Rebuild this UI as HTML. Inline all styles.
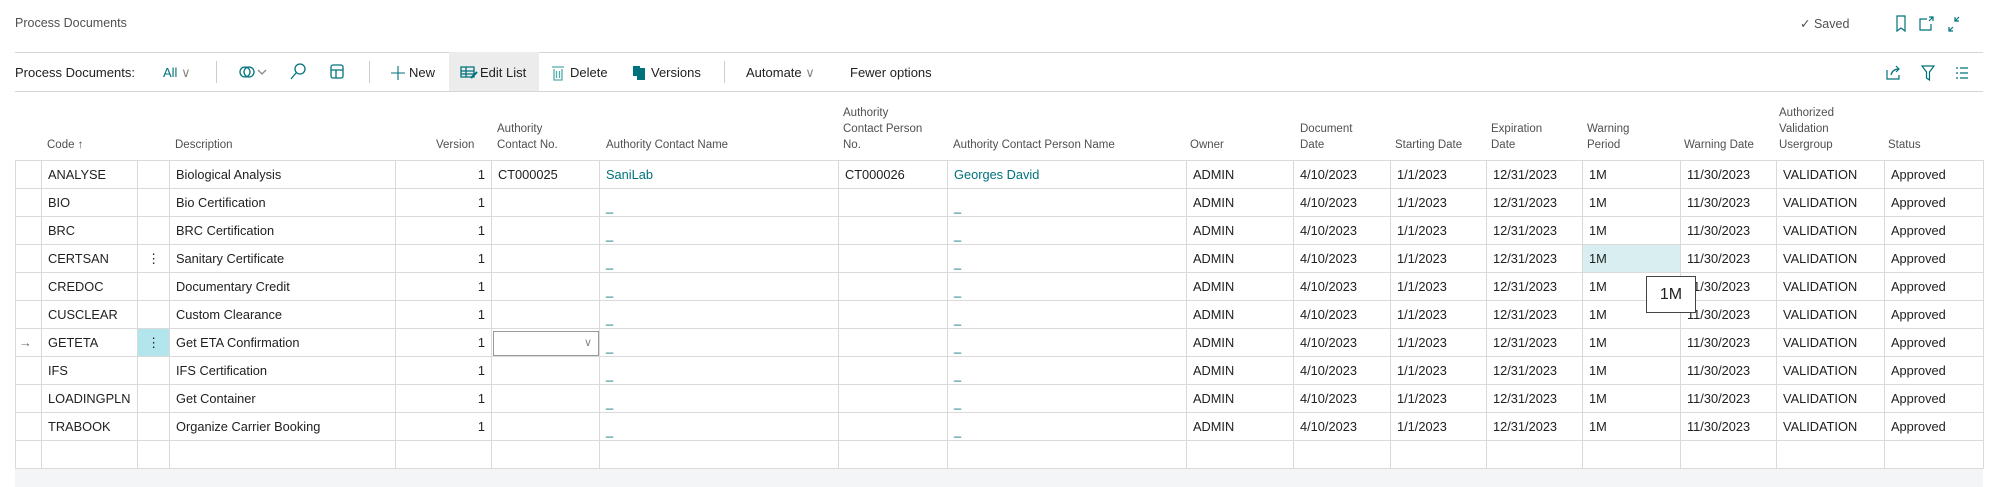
<!DOCTYPE html>
<html><head><meta charset="utf-8"><style>
*{margin:0;padding:0;box-sizing:border-box}
body{width:2003px;height:487px;background:#fff;font-family:"Liberation Sans",sans-serif;color:#212121;position:relative;overflow:hidden;font-size:13px}
.a{position:absolute;white-space:nowrap}
.hl{position:absolute;height:1px;background:#d6d6d6}
.t{color:#00727c}
.hd{position:absolute;font-size:11.5px;color:#505050;line-height:16px;white-space:nowrap}
table{position:absolute;left:15px;top:160px;border-collapse:collapse;table-layout:fixed;width:1968px}
td{border:1px solid #dadada;height:28px;padding:0 6px;white-space:nowrap;overflow:hidden;font-size:12.8px}
td.r{text-align:right}
.u{color:#00727c;position:relative;top:4px}
</style></head><body>
<div class="a" style="left:15px;top:16px;font-size:12.5px;color:#505050">Process Documents</div>
<div class="a" style="left:1800px;top:16px;font-size:12.5px;color:#505050">✓ Saved</div>
<svg class="a" style="left:1893px;top:15px" width="80" height="18" fill="none" stroke="#00727c" stroke-width="1.2">
<path d="M4 1h8v15l-4-3-4 3z"/><path d="M34 4h-7v11h11v-6"/><path d="M36 2h4v4M40 2l-4 4"/><path d="M66 2l-4 4M62 2v4h4M56 16l4-4M56 12v4h4"/></svg>
<div class="hl" style="left:15px;top:52px;width:1968px"></div>
<div class="hl" style="left:15px;top:91px;width:1968px"></div>
<div class="a" style="left:449px;top:52px;width:90px;height:39px;background:#ececec"></div>
<div class="a" style="left:15px;top:65px">Process Documents:</div>
<div class="a t" style="left:163px;top:65px">All <span style="color:#888">∨</span></div>
<div class="a" style="left:216px;top:61px;width:1px;height:22px;background:#ccc"></div>
<div class="a" style="left:369px;top:61px;width:1px;height:22px;background:#ccc"></div>
<div class="a" style="left:724px;top:61px;width:1px;height:22px;background:#ccc"></div>
<svg class="a" style="left:238px;top:63px" width="340" height="20" fill="none" stroke="#00727c" stroke-width="1.3">
<circle cx="7" cy="9" r="5"/><circle cx="11" cy="9" r="5"/><path d="M20 7l4 4 4-4" stroke="#888"/>
<circle cx="62" cy="6" r="5"/><path d="M58 10l-5 6"/>
<rect x="93" y="2" width="12" height="13" rx="2"/><path d="M93 7h12M98 7v8"/>
<path d="M160 3v14M153 10h14" stroke-width="1.1"/>
<path d="M223 4h13v10h-13zM223 8h13M223 11h13M228 4v10" /><path d="M233 15l6-6" stroke-width="2"/>
<path d="M314 4h12M316 6v11h8v-11M318.5 8v7M321.5 8v7" stroke="#5aa"/>
</svg>
<svg class="a" style="left:631px;top:63px" width="20" height="20" fill="#00727c"><rect x="2" y="3" width="7" height="10"/><rect x="6" y="5" width="8" height="12"/></svg>
<div class="a" style="left:409px;top:65px">New</div>
<div class="a" style="left:480px;top:65px">Edit List</div>
<div class="a" style="left:570px;top:65px">Delete</div>
<div class="a" style="left:651px;top:65px">Versions</div>
<div class="a" style="left:746px;top:65px">Automate <span style="color:#888">∨</span></div>
<div class="a" style="left:850px;top:65px">Fewer options</div>
<svg class="a" style="left:1884px;top:64px" width="90" height="18" fill="none" stroke="#00727c" stroke-width="1.2">
<path d="M3 6v9h12v-4M7 11c1-4 4-6 8-6M12 2l3 3-3 3"/><path d="M38 2h12l-4.5 6v8l-3-2v-6z"/><path d="M72 4h2M72 9h2M72 14h2M76 4h8M76 9h8M76 14h8"/></svg>
<div class="hd" style="left:47px;top:137px">Code ↑</div>
<div class="hd" style="left:175px;top:137px">Description</div>
<div class="hd" style="left:436px;top:137px">Version</div>
<div class="hd" style="left:497px;top:121px">Authority<br>Contact No.</div>
<div class="hd" style="left:606px;top:137px">Authority Contact Name</div>
<div class="hd" style="left:843px;top:105px">Authority<br>Contact Person<br>No.</div>
<div class="hd" style="left:953px;top:137px">Authority Contact Person Name</div>
<div class="hd" style="left:1190px;top:137px">Owner</div>
<div class="hd" style="left:1300px;top:121px">Document<br>Date</div>
<div class="hd" style="left:1395px;top:137px">Starting Date</div>
<div class="hd" style="left:1491px;top:121px">Expiration<br>Date</div>
<div class="hd" style="left:1587px;top:121px">Warning<br>Period</div>
<div class="hd" style="left:1684px;top:137px">Warning Date</div>
<div class="hd" style="left:1779px;top:105px">Authorized<br>Validation<br>Usergroup</div>
<div class="hd" style="left:1888px;top:137px">Status</div>
<div class="a" style="left:15px;top:469px;width:1968px;height:18px;background:#f4f5f7"></div>
<table>
<colgroup><col style="width:26px"><col style="width:96px"><col style="width:32px"><col style="width:226px"><col style="width:96px"><col style="width:108px"><col style="width:239px"><col style="width:109px"><col style="width:239px"><col style="width:107px"><col style="width:97px"><col style="width:96px"><col style="width:96px"><col style="width:98px"><col style="width:96px"><col style="width:108px"><col style="width:99px"></colgroup>
<tr><td></td><td>ANALYSE</td><td></td><td>Biological Analysis</td><td class="r">1</td><td>CT000025</td><td class="t">SaniLab</td><td>CT000026</td><td class="t">Georges David</td><td>ADMIN</td><td>4/10/2023</td><td>1/1/2023</td><td>12/31/2023</td><td>1M</td><td>11/30/2023</td><td>VALIDATION</td><td>Approved</td></tr>
<tr><td></td><td>BIO</td><td></td><td>Bio Certification</td><td class="r">1</td><td></td><td><span class="u">_</span></td><td></td><td><span class="u">_</span></td><td>ADMIN</td><td>4/10/2023</td><td>1/1/2023</td><td>12/31/2023</td><td>1M</td><td>11/30/2023</td><td>VALIDATION</td><td>Approved</td></tr>
<tr><td></td><td>BRC</td><td></td><td>BRC Certification</td><td class="r">1</td><td></td><td><span class="u">_</span></td><td></td><td><span class="u">_</span></td><td>ADMIN</td><td>4/10/2023</td><td>1/1/2023</td><td>12/31/2023</td><td>1M</td><td>11/30/2023</td><td>VALIDATION</td><td>Approved</td></tr>
<tr><td></td><td>CERTSAN</td><td style="text-align:center;padding:0">⋮</td><td>Sanitary Certificate</td><td class="r">1</td><td></td><td><span class="u">_</span></td><td></td><td><span class="u">_</span></td><td>ADMIN</td><td>4/10/2023</td><td>1/1/2023</td><td>12/31/2023</td><td style="background:#d8eef1">1M</td><td>11/30/2023</td><td>VALIDATION</td><td>Approved</td></tr>
<tr><td></td><td>CREDOC</td><td></td><td>Documentary Credit</td><td class="r">1</td><td></td><td><span class="u">_</span></td><td></td><td><span class="u">_</span></td><td>ADMIN</td><td>4/10/2023</td><td>1/1/2023</td><td>12/31/2023</td><td>1M</td><td>11/30/2023</td><td>VALIDATION</td><td>Approved</td></tr>
<tr><td></td><td>CUSCLEAR</td><td></td><td>Custom Clearance</td><td class="r">1</td><td></td><td><span class="u">_</span></td><td></td><td><span class="u">_</span></td><td>ADMIN</td><td>4/10/2023</td><td>1/1/2023</td><td>12/31/2023</td><td>1M</td><td>11/30/2023</td><td>VALIDATION</td><td>Approved</td></tr>
<tr><td style="color:#666;padding:0 3px">→</td><td>GETETA</td><td style="text-align:center;padding:0;background:#b3e6ec">⋮</td><td>Get ETA Confirmation</td><td class="r">1</td><td style="padding:0"><div style="margin:1px 0 0 1px;height:25px;border:1px solid #999;text-align:right;padding-right:6px;color:#888;font-size:11px;line-height:22px">∨</div></td><td><span class="u">_</span></td><td></td><td><span class="u">_</span></td><td>ADMIN</td><td>4/10/2023</td><td>1/1/2023</td><td>12/31/2023</td><td>1M</td><td>11/30/2023</td><td>VALIDATION</td><td>Approved</td></tr>
<tr><td></td><td>IFS</td><td></td><td>IFS Certification</td><td class="r">1</td><td></td><td><span class="u">_</span></td><td></td><td><span class="u">_</span></td><td>ADMIN</td><td>4/10/2023</td><td>1/1/2023</td><td>12/31/2023</td><td>1M</td><td>11/30/2023</td><td>VALIDATION</td><td>Approved</td></tr>
<tr><td></td><td>LOADINGPLN</td><td></td><td>Get Container</td><td class="r">1</td><td></td><td><span class="u">_</span></td><td></td><td><span class="u">_</span></td><td>ADMIN</td><td>4/10/2023</td><td>1/1/2023</td><td>12/31/2023</td><td>1M</td><td>11/30/2023</td><td>VALIDATION</td><td>Approved</td></tr>
<tr><td></td><td>TRABOOK</td><td></td><td>Organize Carrier Booking</td><td class="r">1</td><td></td><td><span class="u">_</span></td><td></td><td><span class="u">_</span></td><td>ADMIN</td><td>4/10/2023</td><td>1/1/2023</td><td>12/31/2023</td><td>1M</td><td>11/30/2023</td><td>VALIDATION</td><td>Approved</td></tr>
<tr><td></td><td></td><td></td><td></td><td></td><td></td><td></td><td></td><td></td><td></td><td></td><td></td><td></td><td></td><td></td><td></td><td></td></tr>
</table>
<div class="a" style="left:1646px;top:276px;width:50px;height:37px;background:#fff;border:1px solid #444;font-size:16px;line-height:35px;text-align:center">1M</div>
</body></html>
